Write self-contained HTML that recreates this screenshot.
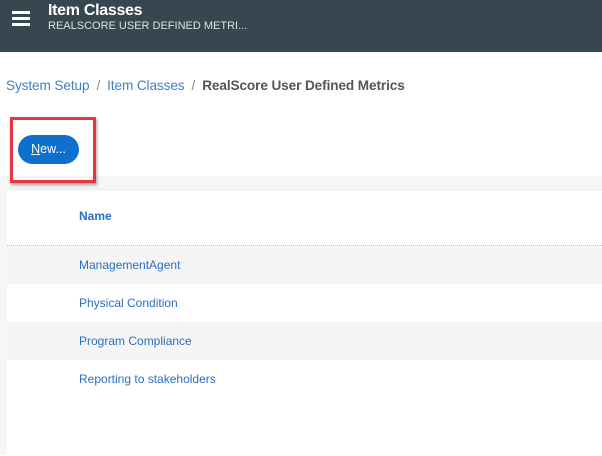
<!DOCTYPE html><html><head><style>
body{margin:0;width:602px;height:455px;overflow:hidden;background:#fff;font-family:"Liberation Sans",sans-serif;position:relative}
.hd{position:absolute;left:0;top:0;width:602px;height:52px;background:#37474f;color:#fff}
.hb{position:absolute;left:12px;width:18px;height:3px;background:#fff}
.t1{position:absolute;left:48px;top:2px;font-size:16px;font-weight:bold;letter-spacing:-0.3px}
.t2{position:absolute;left:48px;top:20px;font-size:11px;color:#dde2e4}
.bc{position:absolute;left:6px;top:78px;font-size:13.6px;color:#3f7fc9;letter-spacing:-0.1px}
.bc .s{color:#888;margin:0 7px}
.bc b{color:#555}
.band{position:absolute;left:0;top:176px;width:602px;height:279px;background:#f5f6f6}
.panel{position:absolute;left:7px;top:189px;width:595px;height:266px;background:#fff;border-top:1px solid #e8ecec}
.row{position:absolute;left:7px;width:595px;height:38px;font-size:12px;color:#2a6ec6;line-height:38px}
.row span{position:absolute;left:72px}
.red{position:absolute;left:10px;top:117px;width:80px;height:60px;border:3px solid #e8363f;box-shadow:1px 2px 3px rgba(0,0,0,.35)}
.btn{position:absolute;left:18px;top:135px;width:61px;height:29px;border-radius:15px;background:#0f6fcc;color:#fff;font-size:12.5px;text-align:center;line-height:29px}
</style></head><body>
<div class="hd"><div class="hb" style="top:11px"></div><div class="hb" style="top:17px"></div><div class="hb" style="top:23px"></div>
<div class="t1">Item Classes</div><div class="t2">REALSCORE USER DEFINED METRI...</div></div>
<div class="bc">System Setup<span class="s">/</span>Item Classes<span class="s">/</span><b>RealScore User Defined Metrics</b></div>
<div class="band"></div><div class="panel"></div>
<div class="row" style="top:197px;font-weight:bold;color:#2a6ec6"><span>Name</span></div>
<div style="position:absolute;left:7px;top:245px;width:595px;border-top:1px dotted #bbb"></div>
<div class="row" style="top:246px;background:#f5f5f5"><span>ManagementAgent</span></div>
<div class="row" style="top:284px"><span>Physical Condition</span></div>
<div class="row" style="top:322px;background:#f5f5f5"><span>Program Compliance</span></div>
<div class="row" style="top:360px"><span>Reporting to stakeholders</span></div>
<div class="red"></div>
<div class="btn"><u>N</u>ew...</div>
</body></html>
